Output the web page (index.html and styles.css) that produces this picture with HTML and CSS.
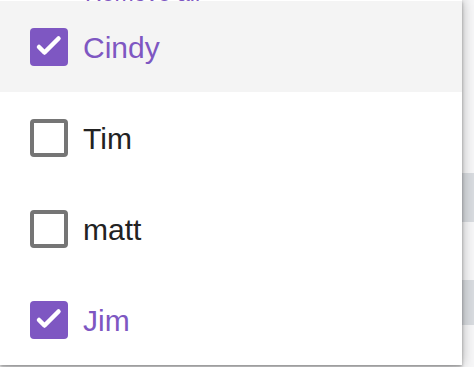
FILE: index.html
```html
<!DOCTYPE html>
<html>
<head>
<meta charset="utf-8">
<link rel="stylesheet" href="styles.css">
</head>
<body>
<div class="menu">
  <div class="peek"><span>Remove all</span></div>
  <div class="item active checked">
    <span class="box"><svg viewBox="0 0 38 38"><polyline points="9,19 14.5,24.5 28.5,10.5"/></svg></span>
    <span class="label">Cindy</span>
  </div>
  <div class="item">
    <span class="box"></span>
    <span class="label">Tim</span>
  </div>
  <div class="item">
    <span class="box"></span>
    <span class="label">matt</span>
  </div>
  <div class="item checked">
    <span class="box"><svg viewBox="0 0 38 38"><polyline points="9,19 14.5,24.5 28.5,10.5"/></svg></span>
    <span class="label">Jim</span>
  </div>
</div>
</body>
</html>
```

FILE: styles.css
```css
html, body {
  margin: 0;
  padding: 0;
}
body {
  width: 474px;
  height: 367px;
  overflow: hidden;
  font-family: "Liberation Sans", Arial, sans-serif;
  background: linear-gradient(to bottom,
    #f7f7f8 0, #f7f7f8 173px,
    #d9dce0 173px, #d9dce0 222px,
    #f7f7f8 222px, #f7f7f8 280px,
    #d9dce0 280px, #d9dce0 325px,
    #f7f7f8 325px);
}
.menu {
  position: relative;
  width: 462px;
  height: 365px;
  padding-top: 1px;
  box-sizing: border-box;
  background: #fff;
  box-shadow: 0 0 12px rgba(0,0,0,0.3), 0 2px 3px rgba(0,0,0,0.3);
}
.peek {
  position: absolute;
  top: 0;
  left: 85px;
  height: 3px;
  overflow: hidden;
  z-index: 2;
}
.peek span {
  display: block;
  margin-top: -18px;
  font-size: 23px;
  line-height: 23px;
  color: #7e57c2;
  white-space: nowrap;
}
.item {
  display: flex;
  align-items: center;
  height: 91px;
  padding-left: 30px;
  box-sizing: border-box;
}
.item.active {
  background: #f4f4f4;
}
.box {
  width: 38px;
  height: 38px;
  box-sizing: border-box;
  border: 4px solid #757575;
  border-radius: 4px;
  flex: none;
  display: flex;
}
.checked .box {
  border: none;
  background: #7e57c2;
}
.box svg {
  width: 38px;
  height: 38px;
}
.box polyline {
  fill: none;
  stroke: #fff;
  stroke-width: 4.5;
  stroke-linecap: round;
  stroke-linejoin: round;
}
.label {
  margin-left: 15px;
  padding-top: 2px;
  font-size: 30px;
  color: #222;
}
.checked .label {
  color: #7e57c2;
}
```
